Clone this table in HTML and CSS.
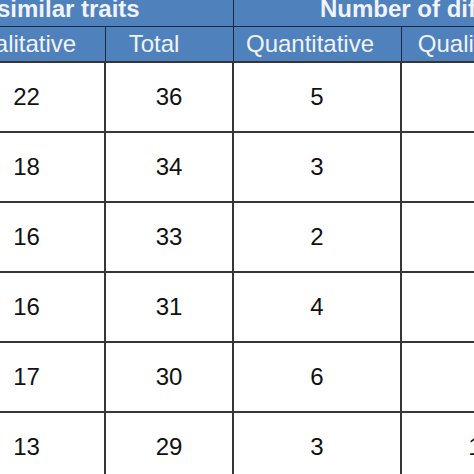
FILE: index.html
```html
<!DOCTYPE html>
<html lang="en">
<head>
<meta charset="utf-8">
<link rel="stylesheet" href="styles.css">
</head>
<body>
<div class="viewport">
<table class="traits">
  <colgroup>
    <col class="c-qn">
    <col class="c-ql">
    <col class="c-tot">
    <col class="c-qn2">
    <col class="c-ql2">
    <col class="c-tot2">
  </colgroup>
  <thead>
    <tr class="group-row">
      <th colspan="3" class="group">Number of similar traits</th>
      <th colspan="3" class="group">Number of different traits</th>
    </tr>
    <tr class="sub-row">
      <th class="sub">Quantitative</th>
      <th class="sub">Qualitative</th>
      <th class="sub sub-total">Total</th>
      <th class="sub">Quantitative</th>
      <th class="sub">Qualitative</th>
      <th class="sub sub-total">Total</th>
    </tr>
  </thead>
  <tbody>
    <tr><td>14</td><td>22</td><td>36</td><td>5</td><td>3</td><td>8</td></tr>
    <tr><td>16</td><td>18</td><td>34</td><td>3</td><td>5</td><td>8</td></tr>
    <tr><td>17</td><td>16</td><td>33</td><td>2</td><td>7</td><td>9</td></tr>
    <tr><td>15</td><td>16</td><td>31</td><td>4</td><td>6</td><td>10</td></tr>
    <tr><td>13</td><td>17</td><td>30</td><td>6</td><td>8</td><td>14</td></tr>
    <tr><td>16</td><td>13</td><td>29</td><td>3</td><td>10</td><td>13</td></tr>
  </tbody>
</table>
</div>
</body>
</html>
```

FILE: styles.css
```css
html, body {
  margin: 0;
  padding: 0;
  background: #ffffff;
  overflow: hidden;
}

.viewport {
  width: 474px;
  height: 474px;
  overflow: hidden;
}

.traits {
  border-collapse: collapse;
  table-layout: fixed;
  width: 918px;
  margin-left: -210px;
  margin-top: -9px;
  font-family: "Liberation Sans", Arial, sans-serif;
  font-size: 24px;
  color: #111111;
}

.c-qn { width: 157px; }
.c-ql { width: 157px; }
.c-tot { width: 128px; }
.c-qn2 { width: 168px; }
.c-ql2 { width: 161px; }
.c-tot2 { width: 147px; }

.traits th {
  background: #4f81bd;
  color: #f0f3fc;
  border: 1.5px solid #1b2846;
  padding: 0 14px 0 0;
  text-align: center;
  line-height: 1;
  height: 34px;
}

.traits th.group {
  font-weight: bold;
}

.traits th.sub {
  font-weight: normal;
}

.traits th.sub-total {
  padding-right: 30px;
}

.traits td {
  border: 2px solid #363636;
  text-align: center;
  padding: 0;
  height: 68px;
  line-height: 1;
}
```
